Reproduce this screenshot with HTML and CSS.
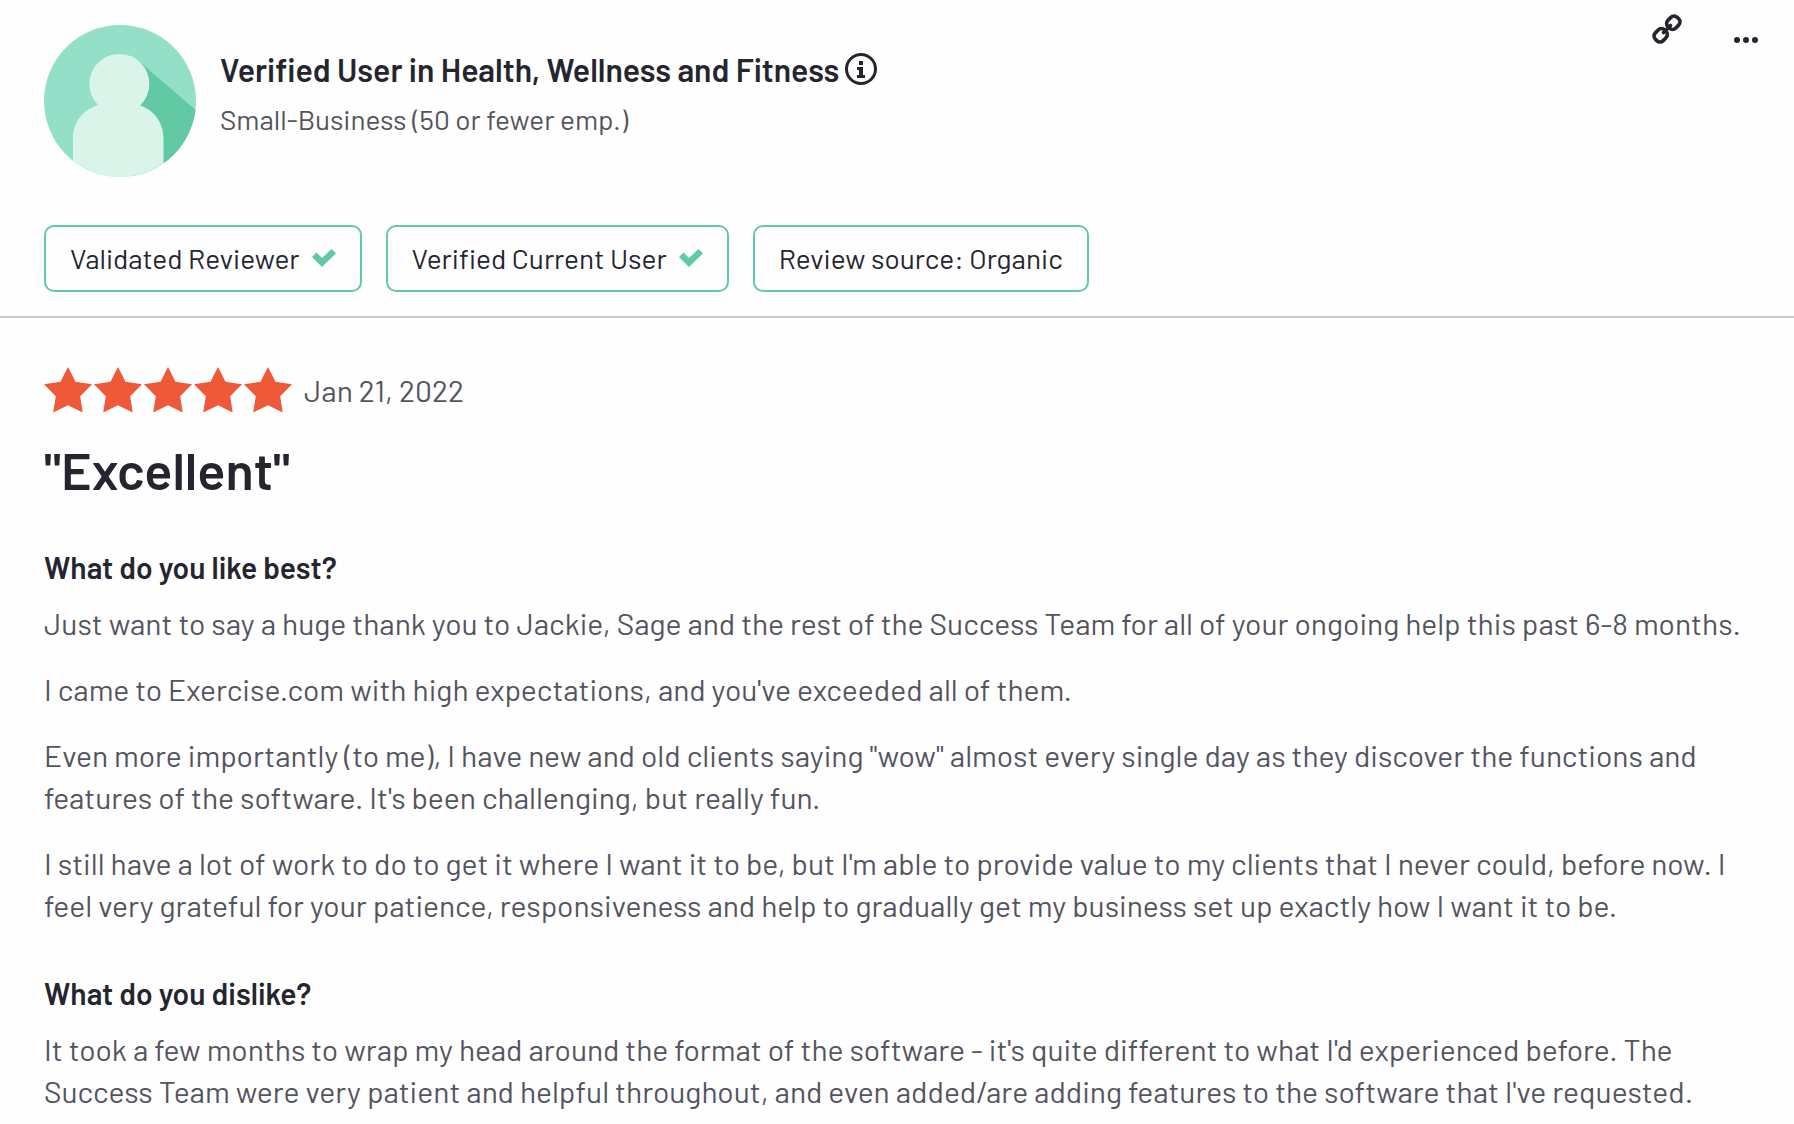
FILE: index.html
```html
<!DOCTYPE html>
<html lang="en">
<head>
  <meta charset="utf-8">
  <meta name="viewport" content="width=device-width, initial-scale=1">
  <title>Review: Excellent</title>
  <link rel="stylesheet" href="styles.css">
</head>
<body>
  <svg class="sprite" aria-hidden="true">
    <symbol id="star" viewBox="0 0 48 46"><path d="M24 0 31.500 14.800 48 17.200 36.200 29.200 38.700 45.500 24 38.300 9.200 45.500 11.800 29.200 0 17.200 16.500 14.800Z"/></symbol>
    <symbol id="check" viewBox="0 0 24 18"><path d="M0 8 4.500 3.500 10 9 19.500 0 24 4.300 10 18Z"/></symbol>
  </svg>
  <article class="review">
    <header class="review-header">
      <div class="reviewer">
        <svg class="avatar" viewBox="0 0 152 152" role="img" aria-label="Reviewer">
          <defs><clipPath id="disc"><circle cx="76" cy="76" r="76"/></clipPath></defs>
          <g clip-path="url(#disc)">
            <rect width="152" height="152" fill="#94dfc7"/>
            <path d="M97 38 160 92V152H90V70Z" fill="#62c9a5"/>
            <path d="M54 80A30 30 0 1 1 96.200 80.500C110 85 119.500 98 119.500 113V152H29V113C29 97 39 85 54 80Z" fill="#dbf4ea"/>
          </g>
        </svg>
        <div class="identity">
          <div class="name-row">
            <h2 class="name">Verified User in Health, Wellness and Fitness</h2>
            <button class="icon-button" type="button" aria-label="About this reviewer">
              <svg width="32" height="32" viewBox="0 0 32 32"><circle cx="16" cy="16" r="14.500" fill="none" stroke="#252530" stroke-width="3"/><path d="M14 8h4v4h-4zM12 14h6v8h2v3h-8v-3h2v-5h-2z" fill="#252530"/></svg>
            </button>
          </div>
          <p class="company">Small-Business (50 or fewer emp.)</p>
        </div>
        <div class="actions">
          <a class="permalink" href="#review" aria-label="Link to this review">
            <svg width="30" height="30" viewBox="0 0 30 30" fill="none" stroke="#252530" stroke-width="3.700"><rect x="-6.500" y="-5.500" width="13" height="11" rx="4.500" transform="translate(21.300 8.700) rotate(-45)"/><rect x="-6.500" y="-5.500" width="13" height="11" rx="4.500" transform="translate(8.700 21.300) rotate(-45)"/><path d="M11.500 18.500 18.500 11.500" stroke-linecap="round"/></svg>
          </a>
          <button class="icon-button more" type="button" aria-label="More options">
            <svg width="24" height="6" viewBox="0 0 24 6" fill="#252530"><circle cx="3" cy="3" r="3"/><circle cx="12" cy="3" r="3"/><circle cx="21" cy="3" r="3"/></svg>
          </button>
        </div>
      </div>
      <ul class="badges">
        <li class="badge">Validated Reviewer <svg class="check"><use href="#check"/></svg></li>
        <li class="badge">Verified Current User <svg class="check"><use href="#check"/></svg></li>
        <li class="badge">Review source: Organic</li>
      </ul>
    </header>
    <div class="review-body" id="review">
      <div class="rating">
        <div class="stars" role="img" aria-label="5 out of 5 stars">
          <svg class="star"><use href="#star"/></svg>
          <svg class="star"><use href="#star"/></svg>
          <svg class="star"><use href="#star"/></svg>
          <svg class="star"><use href="#star"/></svg>
          <svg class="star"><use href="#star"/></svg>
        </div>
        <time datetime="2022-01-21">Jan 21, 2022</time>
      </div>
      <h1 class="title">"Excellent"</h1>
      <section class="answer">
        <h3 class="question">What do you like best?</h3>
        <p>Just want to say a huge thank you to Jackie, Sage and the rest of the Success Team for all of your ongoing help this past 6-8 months.</p>
        <p>I came to Exercise.com with high expectations, and you've exceeded all of them.</p>
        <p>Even more importantly (to me), I have new and old clients saying "wow" almost every single day as they discover the functions and features of the software. It's been challenging, but really fun.</p>
        <p>I still have a lot of work to do to get it where I want it to be, but I'm able to provide value to my clients that I never could, before now. I feel very grateful for your patience, responsiveness and help to gradually get my business set up exactly how I want it to be.</p>
      </section>
      <section class="answer">
        <h3 class="question">What do you dislike?</h3>
        <p>It took a few months to wrap my head around the format of the software - it's quite different to what I'd experienced before. The Success Team were very patient and helpful throughout, and even added/are adding features to the software that I've requested.</p>
      </section>
    </div>
  </article>
</body>
</html>
```

FILE: styles.css
```css
* {
  box-sizing: border-box;
}

body {
  margin: 0;
  background: #fefefe;
  color: #54545e;
  font-family: Barlow, Roboto, sans-serif;
  font-size: 30px;
  line-height: 42px;
}

h1, h2, h3, p, ul {
  margin: 0;
  padding: 0;
}

.sprite {
  display: none;
}

.review-header {
  padding: 25px 36px 24px 44px;
  border-bottom: 2px solid #c8c8c8;
}

.reviewer {
  display: flex;
  gap: 24px;
}

.avatar {
  flex: none;
  width: 152px;
  height: 152px;
}

.identity {
  flex: 1;
  padding-top: 23px;
}

.name-row {
  display: flex;
  align-items: center;
  gap: 6px;
}

.name {
  color: #252530;
  font-size: 32px;
  font-weight: 600;
  line-height: 42px;
}

.company {
  margin-top: 8px;
  font-size: 28px;
  line-height: 42px;
}

.icon-button {
  display: flex;
  padding: 0;
  border: 0;
  background: none;
  cursor: pointer;
}

.actions {
  display: flex;
  align-items: flex-start;
  gap: 52px;
  margin-top: -11px;
}

.permalink {
  display: flex;
}

.more {
  padding-top: 23px;
}

.badges {
  display: flex;
  flex-wrap: wrap;
  gap: 24px;
  margin-top: 48px;
  list-style: none;
}

.badge {
  display: flex;
  align-items: center;
  gap: 12px;
  padding: 10px 24px 11px;
  border: 2px solid #62c9a5;
  border-radius: 10px;
  color: #252530;
  font-size: 28px;
}

.check {
  width: 24px;
  height: 18px;
  fill: #62c9a5;
}

.review-body {
  padding: 49px 44px 12px;
}

.rating {
  display: flex;
  align-items: center;
  gap: 12px;
}

.stars {
  display: flex;
  gap: 2px;
}

.star {
  width: 48px;
  height: 46px;
  fill: #ee5939;
}

.title {
  margin-top: 25px;
  color: #252530;
  font-size: 52px;
  font-weight: 600;
  line-height: 62px;
}

.answer {
  display: flex;
  flex-direction: column;
  gap: 24px;
  margin-top: 46px;
}

.question {
  margin-bottom: -10px;
  color: #252530;
  font-size: 30px;
  font-weight: 600;
  line-height: 42px;
}
```
